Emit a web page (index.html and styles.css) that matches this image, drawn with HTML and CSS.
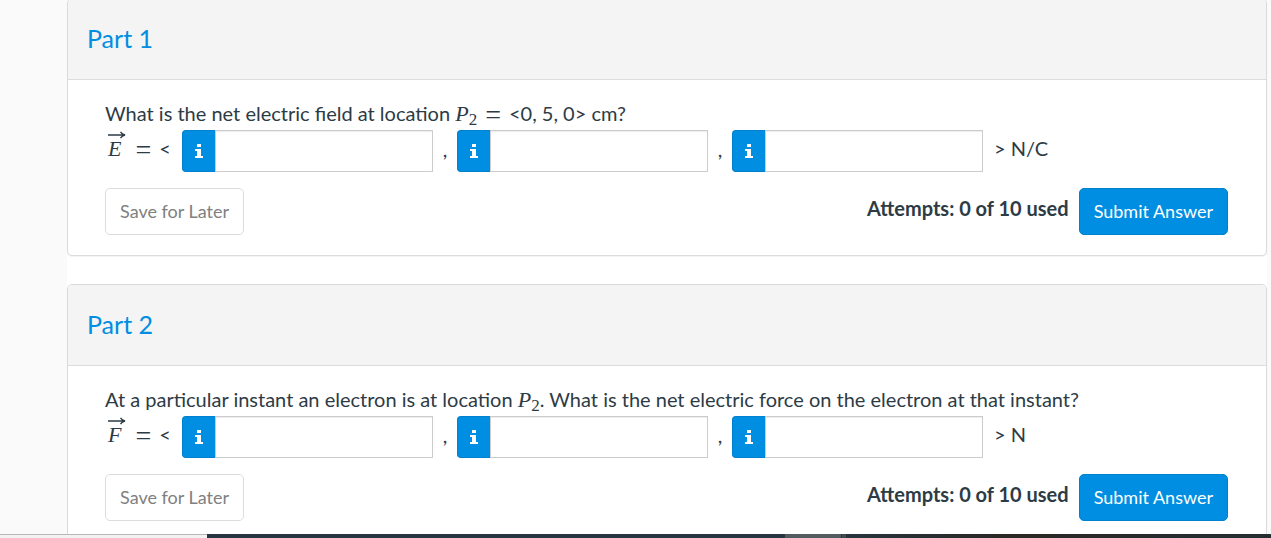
FILE: index.html
```html
<!DOCTYPE html>
<html lang="en">
<head>
<meta charset="utf-8">
<title>Electric field questions</title>
<link rel="stylesheet" href="styles.css">
</head>
<body>
<svg class="defs" aria-hidden="true">
  <symbol id="info" viewBox="0 0 8 14"><path d="M2 0h4v3H2zM0 5h6v7h2v2H0v-2h2V7H0z" fill="currentColor"/></symbol>
  <symbol id="vec" viewBox="0 0 18 8"><path d="M0 4h17M12.500 .8C13.500 2.500 15 3.500 17 4C15 4.500 13.500 5.500 12.500 7.200" fill="none" stroke="currentColor" stroke-width="1.300"/></symbol>
</svg>
<main class="content">
  <section class="card">
    <header class="card-head"><h2 class="title">Part 1</h2></header>
    <form class="card-body">
      <p class="question">What is the net electric field at location <i class="var">P</i><span class="sub">2</span><span class="eq">=</span>&lt;0, 5, 0&gt; cm?</p>
      <div class="answer">
        <div class="lhs"><span class="vector"><svg class="arrow"><use href="#vec"/></svg><i class="var">E</i></span><span class="eq">=</span><span>&lt;</span></div>
        <div class="group"><button type="button" class="info" aria-label="Help for x component"><svg class="icon"><use href="#info"/></svg></button><input class="field" type="text" aria-label="E x component"></div>
        <span class="comma">,</span>
        <div class="group"><button type="button" class="info" aria-label="Help for y component"><svg class="icon"><use href="#info"/></svg></button><input class="field" type="text" aria-label="E y component"></div>
        <span class="comma">,</span>
        <div class="group"><button type="button" class="info" aria-label="Help for z component"><svg class="icon"><use href="#info"/></svg></button><input class="field" type="text" aria-label="E z component"></div>
        <span class="unit">&gt; N/C</span>
      </div>
      <div class="actions">
        <button type="button" class="btn">Save for Later</button>
        <span class="attempts">Attempts: 0 of 10 used</span>
        <button type="button" class="btn primary">Submit Answer</button>
      </div>
    </form>
  </section>
  <section class="card">
    <header class="card-head"><h2 class="title">Part 2</h2></header>
    <form class="card-body">
      <p class="question">At a particular instant an electron is at location <i class="var">P</i><span class="sub">2</span>. What is the net electric force on the electron at that instant?</p>
      <div class="answer">
        <div class="lhs"><span class="vector"><svg class="arrow"><use href="#vec"/></svg><i class="var">F</i></span><span class="eq">=</span><span>&lt;</span></div>
        <div class="group"><button type="button" class="info" aria-label="Help for x component"><svg class="icon"><use href="#info"/></svg></button><input class="field" type="text" aria-label="F x component"></div>
        <span class="comma">,</span>
        <div class="group"><button type="button" class="info" aria-label="Help for y component"><svg class="icon"><use href="#info"/></svg></button><input class="field" type="text" aria-label="F y component"></div>
        <span class="comma">,</span>
        <div class="group"><button type="button" class="info" aria-label="Help for z component"><svg class="icon"><use href="#info"/></svg></button><input class="field" type="text" aria-label="F z component"></div>
        <span class="unit">&gt; N</span>
      </div>
      <div class="actions">
        <button type="button" class="btn">Save for Later</button>
        <span class="attempts">Attempts: 0 of 10 used</span>
        <button type="button" class="btn primary">Submit Answer</button>
      </div>
    </form>
  </section>
</main>
<div class="taskbar"><div class="search"></div><div class="tasks"></div><div class="active"></div><div class="tray"></div></div>
</body>
</html>
```
FILE: styles.css
```css
* { box-sizing: border-box; }
body {
  margin: 0;
  height: 100vh;
  overflow: hidden;
  background: #fafafa;
  color: #2d3b45;
  font: 20px/28px Lato, sans-serif;
}
.defs { display: none; }
.content {
  display: flex;
  flex-direction: column;
  gap: 28px;
  margin: -2px 4px 0 67px;
  background: #fff;
}
.card {
  border: 1px solid #d9dbdc;
  border-radius: 5px;
  background: #fff;
  overflow: hidden;
  box-shadow: 0 1px 1px #0000000d;
}
.card-head {
  padding: 23px 19px 25px;
  background: #f4f4f4;
  border-bottom: 1px solid #dcdcdc;
}
.title {
  margin: 0;
  color: #008ee2;
  font-size: 25px;
  font-weight: 400;
  line-height: 32px;
}
.card-body { padding: 20px 38px 20px 37px; }
.question {
  margin: 0;
  height: 30px;
  line-height: 26px;
  white-space: nowrap;
}
.var { font-family: "Liberation Serif", serif; font-size: 22px; line-height: 20px; }
.sub {
  font-family: "Liberation Serif", serif;
  font-size: 17px;
  line-height: 16px;
  vertical-align: -4px;
}
.eq {
  padding: 0 8px;
  font-family: "Liberation Serif", serif;
  font-size: 28px;
  line-height: 16px;
  vertical-align: -3px;
}
.answer { display: flex; height: 42px; }
.lhs {
  width: 77px;
  padding: 4px 0 0 3px;
  white-space: nowrap;
}
.lhs .eq { padding-left: 14px; }
.vector { position: relative; }
.arrow {
  position: absolute;
  left: 0;
  bottom: 21px;
  width: 18px;
  height: 8px;
}
.group { display: flex; width: 251px; height: 42px; }
.info {
  display: flex;
  align-items: center;
  justify-content: center;
  width: 33px;
  padding: 0;
  border: 1px solid #0081cd;
  border-right: 0;
  border-radius: 4px 0 0 4px;
  background: #008ee2;
  color: #fff;
}
.icon { width: 8px; height: 14px; }
.field {
  flex: 1;
  min-width: 0;
  padding: 0 10px;
  border: 1px solid #ccc;
  background: #fff;
  box-shadow: inset 0 1px 1px #00000013;
  color: inherit;
  font: inherit;
}
.comma {
  width: 24px;
  padding-top: 5px;
  text-align: center;
}
.unit { padding: 4px 0 0 11px; }
.actions {
  display: flex;
  align-items: flex-start;
  gap: 10px;
  margin-top: 16px;
}
.btn {
  height: 47px;
  padding: 0 14px 2px;
  border: 1px solid #dcdcdc;
  border-radius: 5px;
  background: #fff;
  color: #808080;
  font: 18px/28px Lato, sans-serif;
}
.primary { border-color: #0081cd; background: #008ee2; color: #fff; }
.attempts { margin-left: auto; padding-top: 6px; font-weight: 700; }
.taskbar {
  position: fixed;
  inset: auto 0 0;
  display: flex;
  height: 4px;
  background: linear-gradient(90deg, #263640 65%, #2b2723 80%, #252d31 95%);
}
.search { width: 207px; border-top: 1px solid #b8b8b8; background: #f2f2f2; }
.tasks { width: 578px; }
.active { width: 56px; background: #525c5f; }
.tray { width: 4px; margin-left: 1px; background: #414b4f; }
```
